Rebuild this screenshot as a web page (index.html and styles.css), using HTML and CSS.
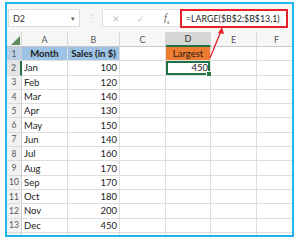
FILE: index.html
```
<!DOCTYPE html>
<html>
<head>
    <meta http-equiv="Content-Type" content="text/html; charset=UTF-8">
    <link rel="stylesheet" href="styles.css">
</head>
<body>
    <div class="frame">
        <div class="formula-bar">
            <div class="name-box">D2<span class="drop">&#9662;</span></div>
            <div class="dots">&#8942;</div>
            <div class="buttons">
                <span class="btn">&#10005;</span>
                <span class="btn check">&#10003;</span>
                <span class="fx">f<sub>x</sub></span>
            </div>
            <div class="formula">=LARGE($B$2:$B$13,1)</div>
        </div>

        <div class="grid">
            <div class="corner"></div>
            <div class="colhead">A</div>
            <div class="colhead">B</div>
            <div class="colhead">C</div>
            <div class="colhead active">D</div>
            <div class="colhead">E</div>
            <div class="colhead">F</div>

            <div class="rowhead blue">1</div>
            <div class="cell head">Month</div>
            <div class="cell head">Sales (in $)</div>
            <div class="cell"></div>
            <div class="cell largest">Largest</div>
            <div class="cell"></div>
            <div class="cell"></div>

            <div class="rowhead active">2</div>
            <div class="cell">Jan</div>
            <div class="cell num">100</div>
            <div class="cell"></div>
            <div class="cell num selected">450</div>
            <div class="cell"></div>
            <div class="cell"></div>

            <div class="rowhead">3</div>
            <div class="cell">Feb</div>
            <div class="cell num">120</div>
            <div class="cell"></div><div class="cell"></div><div class="cell"></div><div class="cell"></div>

            <div class="rowhead">4</div>
            <div class="cell">Mar</div>
            <div class="cell num">140</div>
            <div class="cell"></div><div class="cell"></div><div class="cell"></div><div class="cell"></div>

            <div class="rowhead">5</div>
            <div class="cell">Apr</div>
            <div class="cell num">130</div>
            <div class="cell"></div><div class="cell"></div><div class="cell"></div><div class="cell"></div>

            <div class="rowhead">6</div>
            <div class="cell">May</div>
            <div class="cell num">150</div>
            <div class="cell"></div><div class="cell"></div><div class="cell"></div><div class="cell"></div>

            <div class="rowhead">7</div>
            <div class="cell">Jun</div>
            <div class="cell num">140</div>
            <div class="cell"></div><div class="cell"></div><div class="cell"></div><div class="cell"></div>

            <div class="rowhead">8</div>
            <div class="cell">Jul</div>
            <div class="cell num">160</div>
            <div class="cell"></div><div class="cell"></div><div class="cell"></div><div class="cell"></div>

            <div class="rowhead">9</div>
            <div class="cell">Aug</div>
            <div class="cell num">170</div>
            <div class="cell"></div><div class="cell"></div><div class="cell"></div><div class="cell"></div>

            <div class="rowhead">10</div>
            <div class="cell">Sep</div>
            <div class="cell num">170</div>
            <div class="cell"></div><div class="cell"></div><div class="cell"></div><div class="cell"></div>

            <div class="rowhead">11</div>
            <div class="cell">Oct</div>
            <div class="cell num">180</div>
            <div class="cell"></div><div class="cell"></div><div class="cell"></div><div class="cell"></div>

            <div class="rowhead">12</div>
            <div class="cell">Nov</div>
            <div class="cell num">200</div>
            <div class="cell"></div><div class="cell"></div><div class="cell"></div><div class="cell"></div>

            <div class="rowhead">13</div>
            <div class="cell">Dec</div>
            <div class="cell num">450</div>
            <div class="cell"></div><div class="cell"></div><div class="cell"></div><div class="cell"></div>

            <div class="rowhead"></div>
            <div class="cell"></div><div class="cell"></div><div class="cell"></div><div class="cell"></div><div class="cell"></div><div class="cell"></div>
        </div>

        <!-- red pointer from D1 to the formula box -->
        <svg class="arrow" width="30" height="40" viewBox="0 0 30 40">
            <line x1="5" y1="32" x2="16" y2="5" stroke="#e8202a" stroke-width="1.3"/>
            <polygon points="17,1 19,8 13,7" fill="#e8202a"/>
        </svg>
    </div>
</body>
</html>
```

FILE: styles.css
```
body {
    margin: 0;
    background: #fff;
    font-family: Lato, "Liberation Sans", sans-serif;
}

.frame {
    position: relative;
    box-sizing: border-box;
    width: 289px;
    height: 235px;
    margin: 2px 0 0 5px;
    border: 2px solid #1fb4ee;
    overflow: hidden;
    background: #fff;
}

/* formula bar */
.formula-bar {
    display: flex;
    align-items: center;
    height: 28px;
    background: #f6f6f6;
}

.name-box {
    display: flex;
    align-items: center;
    justify-content: space-between;
    box-sizing: border-box;
    width: 72px;
    height: 18px;
    margin-left: 1px;
    padding: 0 4px 0 4px;
    background: #fff;
    border: 1px solid #dcdcdc;
    font-size: 9px;
    color: #333;
}

.drop {
    font-size: 7px;
    color: #666;
}

.dots {
    width: 22px;
    text-align: center;
    font-size: 9px;
    color: #c4c4c4;
}

.buttons {
    display: flex;
    align-items: center;
    box-sizing: border-box;
    width: 80px;
    height: 18px;
    background: #fff;
    border: 1px solid #e2e2e2;
    border-right: none;
}

.btn {
    width: 24px;
    margin-left: 1px;
    text-align: center;
    font-size: 9px;
    color: #c2c2c2;
}

.check {
    color: #c2c2c2;
}

.fx {
    margin-left: 11px;
    font-family: "Liberation Serif", serif;
    font-style: italic;
    font-size: 10px;
    color: #555;
}

.fx sub {
    font-size: 6px;
}

.formula {
    box-sizing: border-box;
    width: 108px;
    height: 19px;
    margin-left: -2px;
    padding-left: 4px;
    border: 2px solid #e8202a;
    background: #fff;
    font-size: 8.8px;
    line-height: 15px;
    color: #222;
    white-space: nowrap;
    overflow: hidden;
}

/* sheet grid */
.grid {
    display: grid;
    grid-template-columns: 15px 46px 52px 46px 45px 46px 40px;
    grid-template-rows: 15px repeat(14, 14.3px);
    font-size: 9.5px;
    color: #222;
}

.corner {
    position: relative;
    background: #f2f2f2;
    border-right: 1px solid #d6d6d6;
    border-bottom: 1px solid #c8c8c8;
}

.corner::after {
    content: "";
    position: absolute;
    right: 1px;
    bottom: 1px;
    border-left: 9px solid transparent;
    border-bottom: 9px solid #5b8a5b;
}

.colhead {
    display: flex;
    align-items: center;
    justify-content: center;
    background: #f6f6f6;
    border-right: 1px solid #dadada;
    border-bottom: 1px solid #c8c8c8;
    color: #555;
    font-size: 9px;
}

.colhead.active {
    background: #d6d6d6;
    border-bottom: 2px solid #217346;
    color: #333;
}

.rowhead {
    display: flex;
    align-items: center;
    justify-content: center;
    background: #f2f2f2;
    border-right: 1px solid #d0d0d0;
    border-bottom: 1px solid #dcdcdc;
    color: #555;
    font-size: 8.5px;
}

.rowhead.blue {
    background: #b9cfe6;
}

.rowhead.active {
    border-right: 2px solid #217346;
    background: #e4e4e4;
}

.cell {
    display: flex;
    align-items: center;
    padding: 0 2px;
    border-right: 1px solid #dedede;
    border-bottom: 1px solid #dedede;
    white-space: nowrap;
    overflow: hidden;
}

.cell.head {
    justify-content: center;
    background: #9dc3e6;
    font-weight: bold;
}

.cell.num {
    justify-content: flex-end;
}

.cell.largest {
    justify-content: center;
    background: #ed7d31;
    color: #2a1a10;
}

.cell.selected {
    position: relative;
    box-shadow: inset 0 0 0 2px #217346;
    overflow: visible;
}

.cell.selected::after {
    content: "";
    position: absolute;
    right: -2px;
    bottom: -2px;
    width: 4px;
    height: 4px;
    background: #217346;
    border: 1px solid #fff;
}

.arrow {
    position: absolute;
    left: 198px;
    top: 22px;
}
```
